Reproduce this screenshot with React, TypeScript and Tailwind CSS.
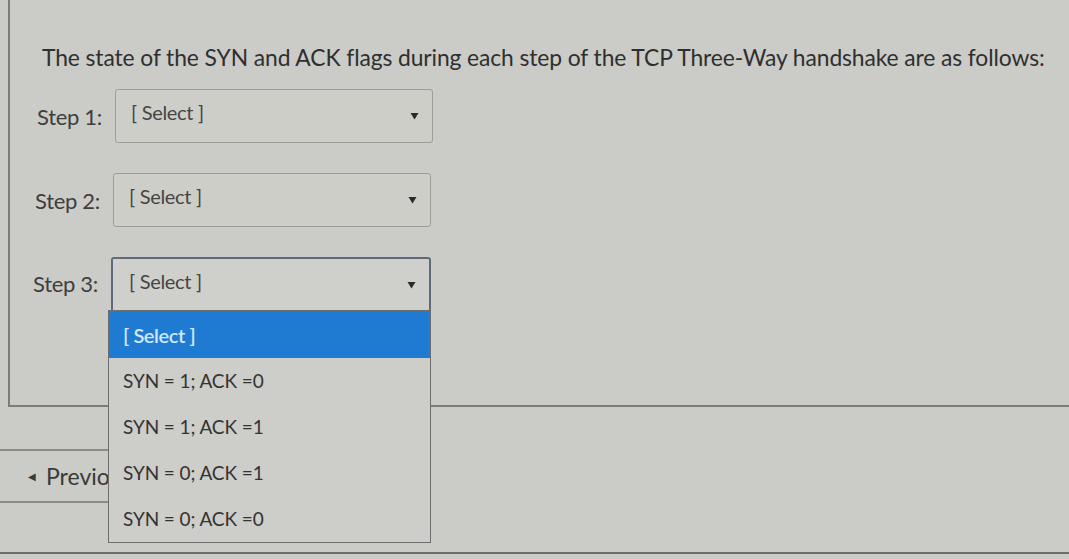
import React from "react";

const options = ["SYN = 1; ACK =0", "SYN = 1; ACK =1", "SYN = 0; ACK =1", "SYN = 0; ACK =0"];

function Caret() {
  return (
    <svg width="9" height="8" viewBox="0 0 9 8" className="shrink-0">
      <path d="M0.5 1 L8.5 1 L4.5 7.5 Z" fill="#2a2a2a" />
    </svg>
  );
}

function SelectBox({ focused = false }: { focused?: boolean }) {
  return (
    <div
      className={
        focused
          ? "flex h-[53px] w-[320px] items-center justify-between rounded-t-[3px] border-2 border-b-0 border-[#5f6b7c] bg-[#cfcfcb] pl-[16px] pr-[13px]"
          : "flex h-[54px] w-[318px] items-center justify-between rounded-[3px] border border-[#9c9c98] bg-[#cecec9] pl-[15px] pr-[13px]"
      }
    >
      <span className="-mt-[8px] text-[20px] tracking-[-0.3px] text-[#454545]">[ Select ]</span>
      <Caret />
    </div>
  );
}

function StepRow({ n, shift, focused = false }: { n: number; shift: string; focused?: boolean }) {
  return (
    <div className={`${shift} flex items-center`}>
      <span className="w-[78px] text-[22px] tracking-[-0.3px] text-[#3e3e3e]">Step {n}:</span>
      <div className="relative">
        <SelectBox focused={focused} />
        {focused && (
          <ul className="absolute left-[-3px] top-[53px] z-10 w-[323px] border border-[#6e6e6e] bg-[#cdcdc9]">
            <li className="flex h-[47px] items-center bg-[#1f7bd2] pl-[14px] text-[20px] font-semibold tracking-[-0.4px] text-[#d3e6fa]">
              [ Select ]
            </li>
            {options.map((o) => (
              <li key={o} className="flex h-[46px] items-center pl-[14px] text-[19px] tracking-[-0.1px] text-[#333333]">
                {o}
              </li>
            ))}
          </ul>
        )}
      </div>
    </div>
  );
}

export default function App() {
  return (
    <div
      className="relative h-[559px] w-[1069px] overflow-hidden bg-[#cbcbc7]"
      style={{ fontFamily: "Lato, 'Open Sans', 'Liberation Sans', sans-serif" }}
    >
      {/* question panel */}
      <div className="ml-[8px] h-[407px] border-b-2 border-l-2 border-[#7c7c78] pl-[32px] pt-[42px]">
        <p className="whitespace-nowrap text-[22.85px] leading-[30px] tracking-[-0.1px] text-[#2f2f2f]">
          The state of the SYN and ACK flags during each step of the TCP Three-Way handshake are as follows:
        </p>
        <div className="mt-[17px] flex flex-col gap-[30px]">
          <StepRow n={1} shift="-ml-[5px]" />
          <StepRow n={2} shift="-ml-[7px]" />
          <StepRow n={3} shift="-ml-[9px]" focused />
        </div>
      </div>

      {/* navigation bar */}
      <div className="mt-[42px] flex h-[54px] w-[130px] -translate-x-[4px] items-center border-y-2 border-r-2 border-[#8a8a86] pl-[32px]">
        <span className="mr-[10px] text-[10px] text-[#3a3a3a]">◀</span>
        <span className="text-[23px] text-[#3a3a3a]">Previous</span>
      </div>
      <div className="mt-[49px] h-[2px] w-full bg-[#6e6e6a]" />
    </div>
  );
}
